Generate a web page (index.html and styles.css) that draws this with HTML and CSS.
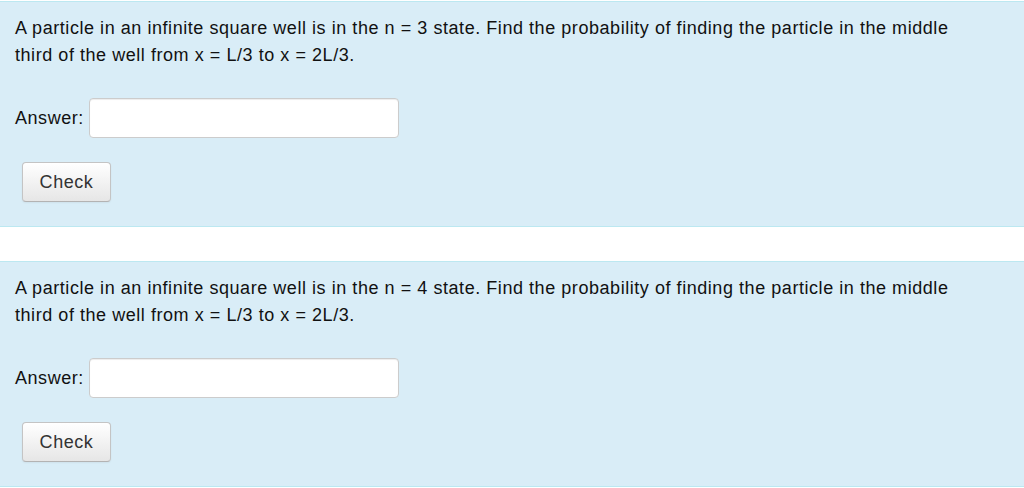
FILE: index.html
```html
<!DOCTYPE html>
<html>
<head>
  <title>Quantum Wells</title>
  <link rel="stylesheet" href="styles.css">
</head>
<body>
  <div class="question">
    <p class="prompt">A particle in an infinite square well is in the n = 3 state. Find the probability of finding the particle in the middle third of the well from x = L/3 to x = 2L/3.</p>
    <div class="answer-row">
      <label for="answer-1">Answer:</label>
      <input type="text" id="answer-1">
    </div>
    <button class="check-button">Check</button>
  </div>

  <div class="question">
    <p class="prompt">A particle in an infinite square well is in the n = 4 state. Find the probability of finding the particle in the middle third of the well from x = L/3 to x = 2L/3.</p>
    <div class="answer-row">
      <label for="answer-2">Answer:</label>
      <input type="text" id="answer-2">
    </div>
    <button class="check-button">Check</button>
  </div>
</body>
</html>
```

FILE: styles.css
```css
body {
  font-family: "Liberation Sans", Arial, sans-serif;
  font-size: 18px;
  letter-spacing: 0.55px;
  color: #111;
  margin: 0;
  padding-top: 1px;
  background-color: #ffffff;
}

.question {
  background-color: #d9edf7;
  border-top: 1px solid #bce8f1;
  border-bottom: 1px solid #bce8f1;
  padding: 13px 15px 24px 15px;
  margin-bottom: 34px;
}

.question:last-child {
  margin-bottom: 0;
}

.prompt {
  margin: 0;
  line-height: 27px;
  max-width: 960px;
}

.answer-row {
  display: flex;
  align-items: center;
  gap: 5px;
  margin-top: 29px;
}

.answer-row input {
  width: 310px;
  height: 40px;
  box-sizing: border-box;
  border: 1px solid #cccccc;
  border-radius: 4px;
  background-color: #ffffff;
  box-shadow: inset 0 1px 1px rgba(0, 0, 0, 0.075);
  font-size: 16px;
  padding: 6px 10px;
}

.check-button {
  display: block;
  margin: 24px 0 0 7px;
  width: 89px;
  height: 40px;
  font-family: "Liberation Sans", Arial, sans-serif;
  font-size: 18px;
  letter-spacing: 0.55px;
  color: #333;
  background-image: linear-gradient(#ffffff, #e6e6e6);
  border: 1px solid #c4c4c4;
  border-bottom-color: #b3b3b3;
  border-radius: 4px;
  box-shadow: 0 1px 2px rgba(0, 0, 0, 0.05);
  cursor: pointer;
}
```
